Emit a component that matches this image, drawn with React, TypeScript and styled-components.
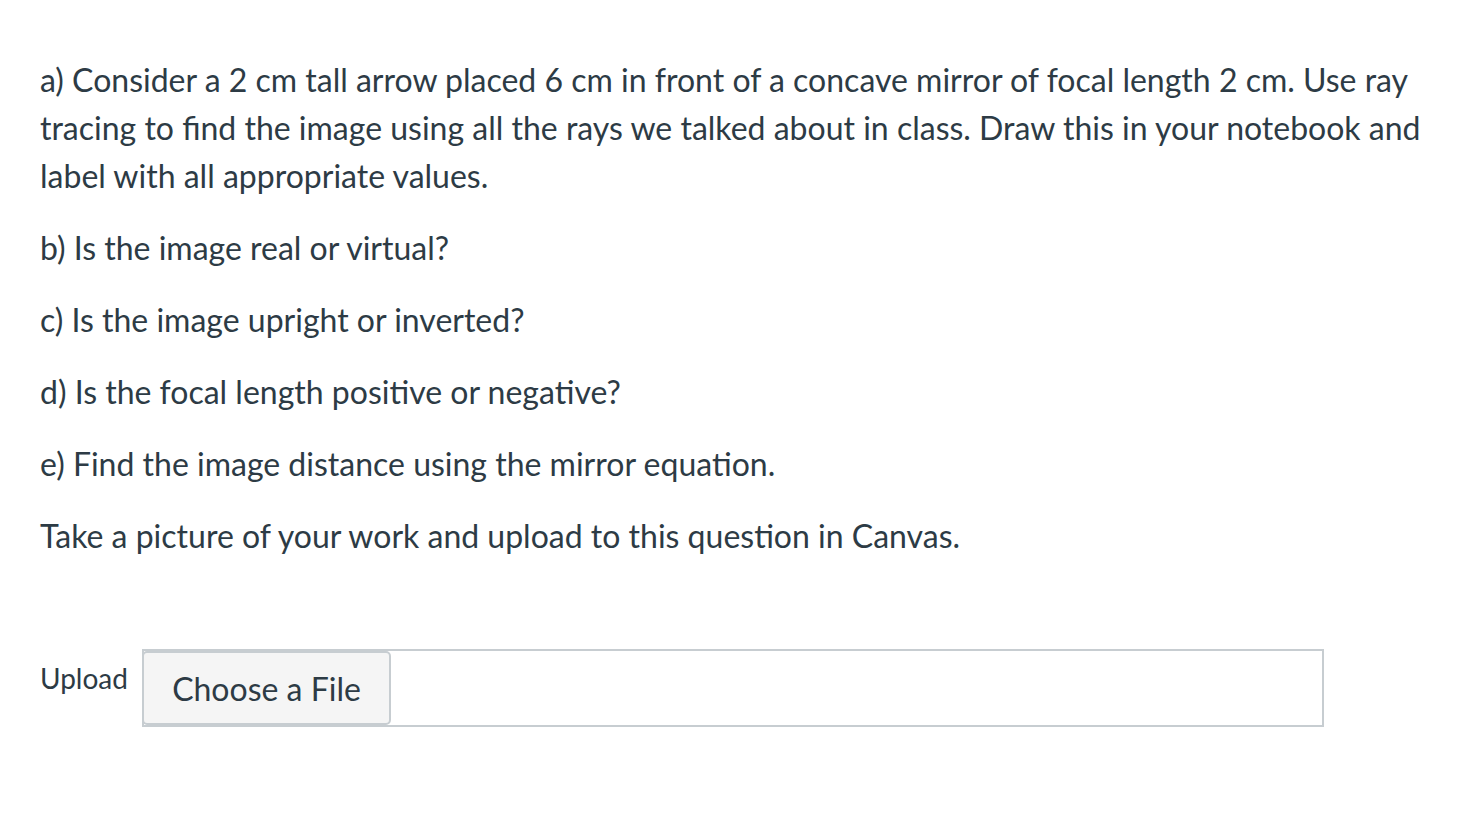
import React from 'react';
import styled, { createGlobalStyle } from 'styled-components';

const GlobalStyle = createGlobalStyle`
    body {
        margin: 0;
        background: #ffffff;
        font-family: Lato, "Noto Sans", sans-serif;
        color: #2d3b45;
    }
`;

const Page = styled.div`
    padding: 56px 0 0 40px;
    width: 1390px;
`;

const Question = styled.div`
    font-size: 32px;
    line-height: 48px;
`;

const Para = styled.p`
    margin: 0 0 24px 0;
`;

const UploadRow = styled.div`
    display: flex;
    align-items: flex-start;
    margin-top: 89px;
`;

const Label = styled.label`
    font-size: 28px;
    line-height: 32px;
    padding-top: 13px;
    width: 102px;
`;

const FileBox = styled.div`
    display: flex;
    align-items: center;
    width: 1182px;
    height: 78px;
    box-sizing: border-box;
    border: 2px solid #c7cdd1;
    background: #ffffff;
`;

const ChooseButton = styled.button`
    font-family: Lato, "Noto Sans", sans-serif;
    font-size: 32px;
    color: #2d3b45;
    background: #f5f5f5;
    border: 2px solid #c7cdd1;
    border-radius: 5px;
    width: 249px;
    height: 74px;
    margin: 0 0 0 -2px;
    padding: 0;
    box-sizing: border-box;
    cursor: pointer;
`;

const paras = [
    'a) Consider a 2 cm tall arrow placed 6 cm in front of a concave mirror of focal length 2 cm. Use ray tracing to find the image using all the rays we talked about in class. Draw this in your notebook and label with all appropriate values.',
    'b) Is the image real or virtual?',
    'c) Is the image upright or inverted?',
    'd) Is the focal length positive or negative?',
    'e) Find the image distance using the mirror equation.',
    'Take a picture of your work and upload to this question in Canvas.',
];

const App = () => {
    return (
        <>
            <GlobalStyle />
            <Page>
                <Question>
                    {paras.map((p) => (
                        <Para key={p}>{p}</Para>
                    ))}
                </Question>
                <UploadRow>
                    <Label>Upload</Label>
                    <FileBox>
                        <ChooseButton>Choose a File</ChooseButton>
                    </FileBox>
                </UploadRow>
            </Page>
        </>
    );
};

export default App;
